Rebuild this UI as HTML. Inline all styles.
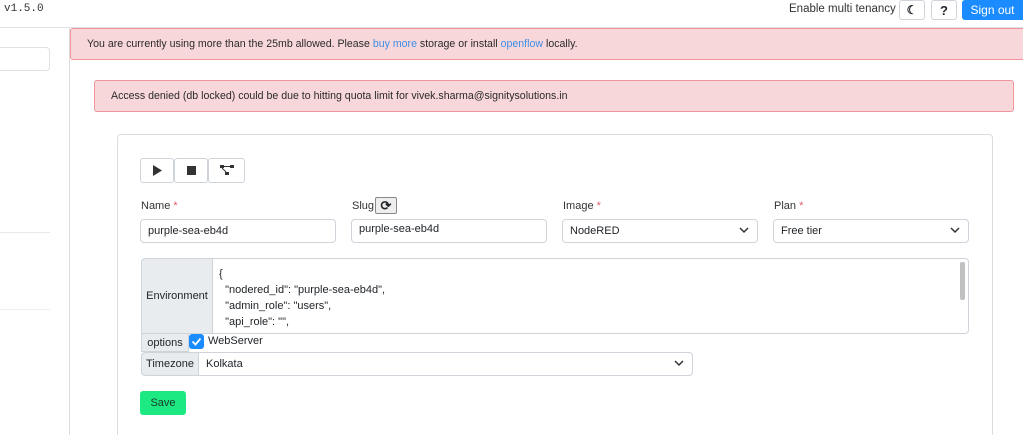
<!DOCTYPE html>
<html style="overflow:hidden;width:1023px;height:435px"><head><style>
*{box-sizing:border-box;margin:0;padding:0}
body{width:1023px;height:435px;overflow:hidden;background:#fff;font-family:"Liberation Sans",sans-serif;font-size:11px;color:#212529;position:relative}
.a{position:absolute}
.ver{left:4px;top:3px;font-family:"Liberation Mono",monospace;font-size:11px;color:#333}
.topline{left:0;top:27px;width:1023px;height:1px;background:#dee2e6}
.side{left:69px;top:28px;width:1px;height:407px;background:#dcdcdc}
.alert{background:#f8d7da;border:1px solid #f1959d;border-radius:3px;color:#2a2a2a;font-size:10.6px;padding-left:16px;display:flex;align-items:center}
.alert span{color:#3d8fe6}
.inp{border:1px solid #ced4da;border-radius:4px;background:#fff;display:flex;align-items:center;padding-left:7px;font-size:11px}
.btn{border:1px solid #ced4da;border-radius:3px;background:#fff;display:flex;align-items:center;justify-content:center}
.lbl{font-size:11px;color:#333}
.lbl b{color:#e35d6a;font-weight:normal}
.chev{position:absolute;right:8px;top:6px}
.grp{background:#e9ecef;border:1px solid #ced4da;display:flex;align-items:center;justify-content:center;font-size:11px}
</style></head><body>
<div class="a ver">v1.5.0</div>
<div class="a" style="left:789px;top:3px;font-size:11.5px;color:#333">Enable multi tenancy</div>
<div class="a btn" style="left:899px;top:0;width:26px;height:20px;font-size:12px;font-weight:bold">☾</div>
<div class="a btn" style="left:931px;top:0;width:26px;height:20px;font-size:13px;font-weight:bold">?</div>
<div class="a" style="left:962px;top:0;width:61px;height:20px;background:#1a8cff;border-radius:3px 0 0 3px;color:#fff;font-size:12px;display:flex;align-items:center;justify-content:center">Sign out</div>
<div class="a topline"></div>
<div class="a side"></div>
<div class="a" style="left:-5px;top:47px;width:55px;height:24px;border:1px solid #dee2e6;border-radius:4px"></div>
<div class="a" style="left:0;top:232px;width:50px;height:1px;background:#e9e9e9"></div>
<div class="a" style="left:0;top:309px;width:50px;height:1px;background:#f0f0f0"></div>
<div class="a alert" style="left:70px;top:28px;width:960px;height:32px">You are currently using more than the 25mb allowed. Please&nbsp;<span>buy more</span>&nbsp;storage or install&nbsp;<span>openflow</span>&nbsp;locally.</div>
<div class="a alert" style="left:94px;top:80px;width:920px;height:32px">Access denied (db locked) could be due to hitting quota limit for vivek.sharma@signitysolutions.in</div>
<div class="a" style="left:117px;top:134px;width:876px;height:310px;border:1px solid #dcdcdc;border-radius:4px"></div>
<div class="a btn" style="left:140px;top:158px;width:34px;height:25px"><svg width="10" height="11"><path d="M1 0L10 5.5L1 11Z" fill="#333"/></svg></div>
<div class="a btn" style="left:174px;top:158px;width:34px;height:25px"><svg width="9" height="9"><rect width="9" height="9" fill="#333"/></svg></div>
<div class="a btn" style="left:208px;top:158px;width:37px;height:25px"><svg width="14" height="11"><rect x="0" y="0" width="4" height="3" fill="#333"/><rect x="10" y="0" width="4" height="3" fill="#333"/><rect x="5" y="7" width="4" height="3" fill="#333"/><path d="M4 1.5H10M2 3L6 7" stroke="#333"/></svg></div>
<div class="a lbl" style="left:141px;top:200px">Name <b>*</b></div>
<div class="a lbl" style="left:352px;top:200px">Slug</div>
<div class="a" style="left:375px;top:197px;width:22px;height:17px;border:1px solid #888;border-radius:2px;background:#eee;font-size:13px;text-align:center;line-height:15px;font-weight:bold">⟳</div>
<div class="a lbl" style="left:563px;top:200px">Image <b>*</b></div>
<div class="a lbl" style="left:774px;top:200px">Plan <b>*</b></div>
<div class="a inp" style="left:140px;top:219px;width:196px;height:24px">purple-sea-eb4d</div>
<div class="a inp" style="left:351px;top:219px;width:196px;height:24px;align-items:flex-start;padding-top:3px">purple-sea-eb4d</div>
<div class="a inp" style="left:562px;top:219px;width:196px;height:24px">NodeRED<svg class="chev" width="10" height="8"><path d="M1 2L5 6L9 2" stroke="#333" stroke-width="1.5" fill="none"/></svg></div>
<div class="a inp" style="left:773px;top:219px;width:196px;height:24px">Free tier<svg class="chev" width="10" height="8"><path d="M1 2L5 6L9 2" stroke="#333" stroke-width="1.5" fill="none"/></svg></div>
<div class="a grp" style="left:141px;top:258px;width:72px;height:76px;border-radius:4px 0 0 0">Environment</div>
<div class="a" style="left:212px;top:258px;width:757px;height:76px;border:1px solid #ced4da;border-radius:0 4px 4px 0;overflow:hidden;padding:7px 6px;font-size:11px;line-height:16px;white-space:pre">{
  "nodered_id": "purple-sea-eb4d",
  "admin_role": "users",
  "api_role": "",
  "shlabel": "http://abc.de/signity.cloud"</div>
<div class="a" style="left:960px;top:262px;width:5px;height:38px;background:#c1c1c1;border-radius:2px"></div>
<div class="a grp" style="left:141px;top:333px;width:48px;height:19px">options</div>
<div class="a" style="left:189px;top:334px;width:15px;height:15px;background:#1a8cff;border-radius:3px"><svg width="15" height="15"><path d="M3.5 7.5L6.5 10.5L11.5 4.5" stroke="#fff" stroke-width="1.8" fill="none"/></svg></div>
<div class="a" style="left:208px;top:335px;font-size:11px">WebServer</div>
<div class="a grp" style="left:141px;top:352px;width:58px;height:24px;border-radius:4px 0 0 4px">Timezone</div>
<div class="a inp" style="left:198px;top:352px;width:495px;height:24px;border-radius:0 4px 4px 0">Kolkata<svg class="chev" width="10" height="8"><path d="M1 2L5 6L9 2" stroke="#333" stroke-width="1.5" fill="none"/></svg></div>
<div class="a" style="left:140px;top:391px;width:46px;height:24px;background:#1de982;border-radius:3px;display:flex;align-items:center;justify-content:center;font-size:11px;color:#1a3a2a">Save</div>
</body></html>
